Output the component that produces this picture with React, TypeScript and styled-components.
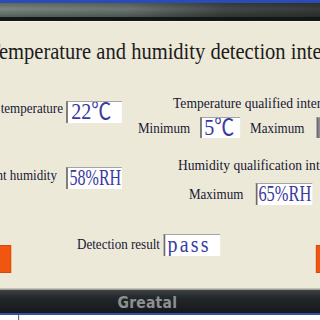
import React from "react";
import styled, { createGlobalStyle } from "styled-components";

const Global = createGlobalStyle`
  html, body { margin: 0; padding: 0; background: #ECE9D8; }
  #root { width: 320px; height: 320px; overflow: hidden; }
`;

const Viewport = styled.div`
  width: 320px;
  height: 320px;
  overflow: hidden;
`;

const Stage = styled.div`
  width: 368px;
  height: 320px;
  transform: scaleX(0.87);
  transform-origin: 0 0;
  display: flex;
  flex-direction: column;
  font-family: "Liberation Serif", "Noto Sans CJK SC", serif;
`;

const TitleBar = styled.div`
  height: 22px;
  flex-shrink: 0;
  background:
    linear-gradient(to bottom, #2b4cb2 0 3px, transparent 3px 17px, #101818 17px 21px, #f4f2e8 21px 22px),
    linear-gradient(to right, rgba(0,0,0,0) 0%, rgba(0,0,0,0.12) 40%, rgba(0,0,0,0.45) 70%, rgba(0,0,0,0.55) 100%),
    linear-gradient(to bottom, #5d6864 3px, #7a8580 9px, #535e5a 17px);
`;

const Body = styled.div`
  height: 266px;
  flex-shrink: 0;
  background: #ECE9D8;
  display: flex;
  flex-direction: column;
  overflow: hidden;
`;

const Title = styled.div`
  margin: 16px 0 0 -14px;
  font-size: 23.6px;
  line-height: 26px;
  color: #1b1b1b;
  white-space: nowrap;
`;

const Row = styled.div<{ $mt: number }>`
  display: flex;
  align-items: flex-start;
  margin-top: ${(p) => p.$mt}px;
  flex-shrink: 0;
`;

const LabelCell = styled.div<{ $w: number }>`
  width: ${(p) => p.$w}px;
  flex-shrink: 0;
  display: flex;
  justify-content: flex-end;
`;

const Label = styled.div<{ $dy?: number; $ml?: number }>`
  flex-shrink: 0;
  font-size: 15px;
  line-height: 18px;
  color: #181834;
  white-space: nowrap;
  margin-top: ${(p) => p.$dy ?? 0}px;
  margin-left: ${(p) => p.$ml ?? 0}px;
`;

const ValueBox = styled.div<{ $w: number; $h: number; $dy?: number; $ml?: number; $pl?: number; $gray?: boolean }>`
  box-sizing: border-box;
  flex-shrink: 0;
  width: ${(p) => p.$w}px;
  height: ${(p) => p.$h}px;
  margin-top: ${(p) => p.$dy ?? 0}px;
  margin-left: ${(p) => p.$ml ?? 0}px;
  padding-left: ${(p) => p.$pl ?? 4}px;
  background: ${(p) => (p.$gray ? "#8d8c98" : "#ffffff")};
  border-left: 2px solid #6c6c6c;
  border-top: 1px solid #a4a4a4;
  font-size: 23px;
  line-height: ${(p) => p.$h - 2}px;
  color: #3a3aa2;
  white-space: nowrap;
  overflow: hidden;
`;

const Squeeze = styled.span<{ $sx?: number; $ls?: number }>`
  display: inline-block;
  transform: scaleX(${(p) => p.$sx ?? 1});
  transform-origin: 0 50%;
  letter-spacing: ${(p) => p.$ls ?? 0}px;
`;

const Group = styled.div<{ $ml: number }>`
  display: flex;
  flex-direction: column;
  margin-left: ${(p) => p.$ml}px;
  flex-shrink: 0;
`;

const GroupTitle = styled.div<{ $indent: number }>`
  padding-left: ${(p) => p.$indent}px;
  font-size: 15.6px;
  line-height: 18px;
  color: #181834;
  white-space: nowrap;
`;

const GroupRow = styled.div<{ $mt: number; $indent?: number }>`
  display: flex;
  align-items: flex-start;
  margin-top: ${(p) => p.$mt}px;
  padding-left: ${(p) => p.$indent ?? 0}px;
`;

const OrangeButton = styled.div<{ $ml: number }>`
  flex-shrink: 0;
  width: 40px;
  height: 28px;
  margin-top: 11px;
  margin-left: ${(p) => p.$ml}px;
  background: #f0560f;
  box-shadow: inset 0 0 0 1px #d8480c;
`;

const Separator = styled.div`
  height: 2px;
  flex-shrink: 0;
  background: linear-gradient(to bottom, #d6d3c6, #8e8e88);
`;

const StatusBar = styled.div`
  height: 23px;
  flex-shrink: 0;
  background: linear-gradient(to bottom, #3c4144 0%, #22272a 35%, #15191b 100%);
  display: flex;
  align-items: center;
  padding-left: 135px;
  padding-top: 2px;
  box-sizing: border-box;
`;

const Brand = styled.span`
  font-family: "DejaVu Sans", "Liberation Sans", sans-serif;
  font-weight: bold;
  font-size: 16px;
  color: #8c9090;
  letter-spacing: 0.3px;
`;

const BlueLine = styled.div`
  height: 2px;
  flex-shrink: 0;
  background: #2f51a6;
`;

const Footer = styled.div`
  height: 5px;
  flex-shrink: 0;
  background: #ffffff;
  display: flex;
  padding-left: 21px;
`;

const Tick = styled.div`
  width: 1.2px;
  background: #3a3a3a;
`;

export default function App() {
  return (
    <Viewport>
      <Global />
      <Stage>
        <TitleBar />
        <Body>
          <Title>Temperature and humidity detection interface</Title>

          <Row $mt={30}>
            <LabelCell $w={72.4}>
              <Label $dy={5}>Current temperature</Label>
            </LabelCell>
            <ValueBox $w={64.3} $h={22} $dy={7} $ml={3.5} $pl={4}>22℃</ValueBox>
            <Group $ml={18.4}>
              <GroupTitle $indent={40.3}>Temperature qualified interval</GroupTitle>
              <GroupRow $mt={5}>
                <Label $dy={2}>Minimum</Label>
                <ValueBox $w={46} $h={21} $ml={11.3} $pl={3}>5℃</ValueBox>
                <Label $dy={2} $ml={11.5}>Maximum</Label>
                <ValueBox $w={40} $h={21} $ml={14.5} $gray />
              </GroupRow>
            </Group>
          </Row>

          <Row $mt={18}>
            <LabelCell $w={65.5}>
              <Label $dy={10}>Current humidity</Label>
            </LabelCell>
            <ValueBox $w={64.3} $h={22} $dy={11} $ml={10.4} $pl={2}>
              <Squeeze $sx={0.8}>58%RH</Squeeze>
            </ValueBox>
            <Group $ml={64.4}>
              <GroupTitle $indent={0}>Humidity qualification interval</GroupTitle>
              <GroupRow $mt={9} $indent={12.6}>
                <Label $dy={2}>Maximum</Label>
                <ValueBox $w={64.3} $h={22} $ml={14.6} $pl={1}>
                  <Squeeze $sx={0.82}>65%RH</Squeeze>
                </ValueBox>
              </GroupRow>
            </Group>
          </Row>

          <Row $mt={29}>
            <OrangeButton $ml={-27.4} />
            <Label $dy={1} $ml={75.9}>Detection result</Label>
            <ValueBox $w={64.4} $h={22} $ml={4.6} $pl={2}>
              <Squeeze $ls={2.5}>pass</Squeeze>
            </ValueBox>
            <OrangeButton $ml={110.3} />
          </Row>
        </Body>
        <Separator />
        <StatusBar>
          <Brand>Greatal</Brand>
        </StatusBar>
        <BlueLine />
        <Footer>
          <Tick />
        </Footer>
      </Stage>
    </Viewport>
  );
}
